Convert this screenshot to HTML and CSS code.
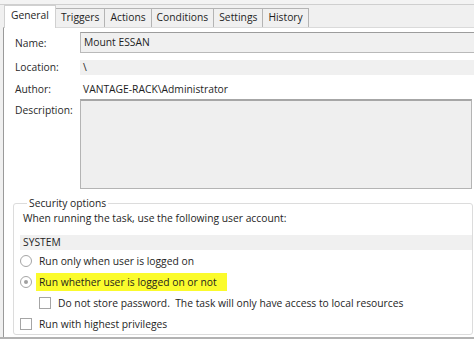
FILE: index.html
```html
<!DOCTYPE html>
<html lang="en">
<head>
  <meta charset="UTF-8" />
  <title>Task Properties</title>
  <link rel="stylesheet" href="styles.css">
</head>
<body>
  <div class="window">
    <div class="tabs">
      <div class="tab active">General</div>
      <div class="tab">Triggers</div>
      <div class="tab">Actions</div>
      <div class="tab">Conditions</div>
      <div class="tab">Settings</div>
      <div class="tab">History</div>
    </div>

    <div class="page">
      <div class="row name-row">
        <span class="label">Name:</span>
        <div class="input">Mount ESSAN</div>
      </div>
      <div class="row location-row">
        <span class="label">Location:</span>
        <div class="readonly">\</div>
      </div>
      <div class="row author-row">
        <span class="label">Author:</span>
        <div class="plain">VANTAGE-RACK\Administrator</div>
      </div>
      <div class="row desc-row">
        <span class="label">Description:</span>
        <div class="textarea"></div>
      </div>

      <fieldset class="group">
        <legend>Security options</legend>
        <div class="account-note">When running the task, use the following user account:</div>
        <div class="account">SYSTEM</div>

        <div class="option">
          <span class="radio"></span>
          <span>Run only when user is logged on</span>
        </div>
        <div class="option">
          <span class="radio checked"></span>
          <span class="highlight">Run whether user is logged on or not</span>
        </div>
        <div class="option sub">
          <span class="check"></span>
          <span>Do not store password.&nbsp; The task will only have access to local resources</span>
        </div>
        <div class="option">
          <span class="check"></span>
          <span>Run with highest privileges</span>
        </div>
      </fieldset>
    </div>
  </div>
  <div class="footer"></div>
</body>
</html>
```

FILE: styles.css
```css
* {
  box-sizing: border-box;
  margin: 0;
  padding: 0;
}

body {
  width: 474px;
  height: 341px;
  overflow: hidden;
  background: #f3f3f3;
  padding-top: 4px;
  font-family: 'Open Sans', 'Noto Sans', sans-serif;
  font-size: 10.3px;
  color: #1e1e1e;
}

.window {
  width: 474px;
  height: 335px;
  background: #f0f0f0;
  border-top: 1px solid #cfcfcf;
  border-bottom: 2px solid #b2b2b2;
  display: flex;
  flex-direction: column;
}

.footer {
  height: 2px;
  background: #ffffff;
}

.tabs {
  display: flex;
  align-items: flex-end;
  height: 22px;
  padding-left: 4px;
}

.tab {
  height: 19px;
  line-height: 17px;
  padding: 0 5px;
  background: #f0f0f0;
  border: 1px solid #b4b4b4;
  border-bottom: none;
  margin-left: -1px;
}

.tab:first-child {
  margin-left: 0;
}

.tab.active {
  height: 23px;
  line-height: 19px;
  padding: 0 6px;
  background: #ffffff;
  position: relative;
  z-index: 1;
  margin-bottom: -1px;
  border-color: #d0d0d0;
}

.page {
  flex: 1;
  margin-left: 3px;
  background: #ffffff;
  border-left: 1px solid #9a9a9a;
  border-top: 1px solid #dadada;
  padding-top: 4px;
}

.row {
  display: flex;
  align-items: flex-start;
}

.label {
  width: 76px;
  padding-left: 11px;
  flex-shrink: 0;
  color: #2a2a2a;
}

.name-row {
  height: 21px;
  align-items: center;
}

.input {
  flex: 1;
  height: 21px;
  line-height: 18px;
  padding-left: 3px;
  background: #f0f0f0;
  border: 1px solid #b9b9b9;
  border-top-color: #9c9c9c;
  border-right: none;
}

.location-row {
  margin-top: 6px;
  height: 16px;
  align-items: center;
}

.readonly {
  flex: 1;
  height: 15px;
  line-height: 14px;
  padding-left: 3px;
  background: #f0f0f0;
}

.author-row {
  margin-top: 5px;
  height: 18px;
  align-items: center;
}

.plain {
  padding-left: 3px;
}

.desc-row {
  margin-top: 1px;
}

.desc-row .label {
  padding-top: 4px;
}

.textarea {
  width: 392px;
  height: 90px;
  background: #efefef;
  border: 1px solid #b4b4b4;
  border-top: 2px solid #a6a6a6;
}

.group {
  margin: 8px 1px 0 9px;
  border: 1px solid #dcdcdc;
  border-radius: 3px;
  padding: 0 0 0 8px;
  height: 138px;
}

.group legend {
  margin-left: 5px;
  padding: 0 2px;
  line-height: 12px;
}

.account-note {
  height: 18px;
  line-height: 18px;
  padding-left: 1px;
}

.account {
  margin-top: 8px;
  margin-left: -2px;
  height: 15px;
  line-height: 15px;
  padding-left: 3px;
  background: #f0f0f0;
}

.option {
  display: flex;
  align-items: center;
  height: 21px;
  margin-left: -2px;
}

.option.sub {
  padding-left: 19px;
}

.radio,
.check {
  width: 12px;
  height: 12px;
  margin-right: 7px;
  flex-shrink: 0;
  border: 1px solid #a5a5a5;
  background: #ffffff;
}

.radio {
  border-radius: 50%;
  display: flex;
  align-items: center;
  justify-content: center;
}

.radio.checked::after {
  content: '';
  width: 4px;
  height: 4px;
  border-radius: 50%;
  background: #a0a0a0;
}

.highlight {
  background: #fbfb2c;
  padding: 2px 10px 2px 3px;
  margin-left: -3px;
}
```
